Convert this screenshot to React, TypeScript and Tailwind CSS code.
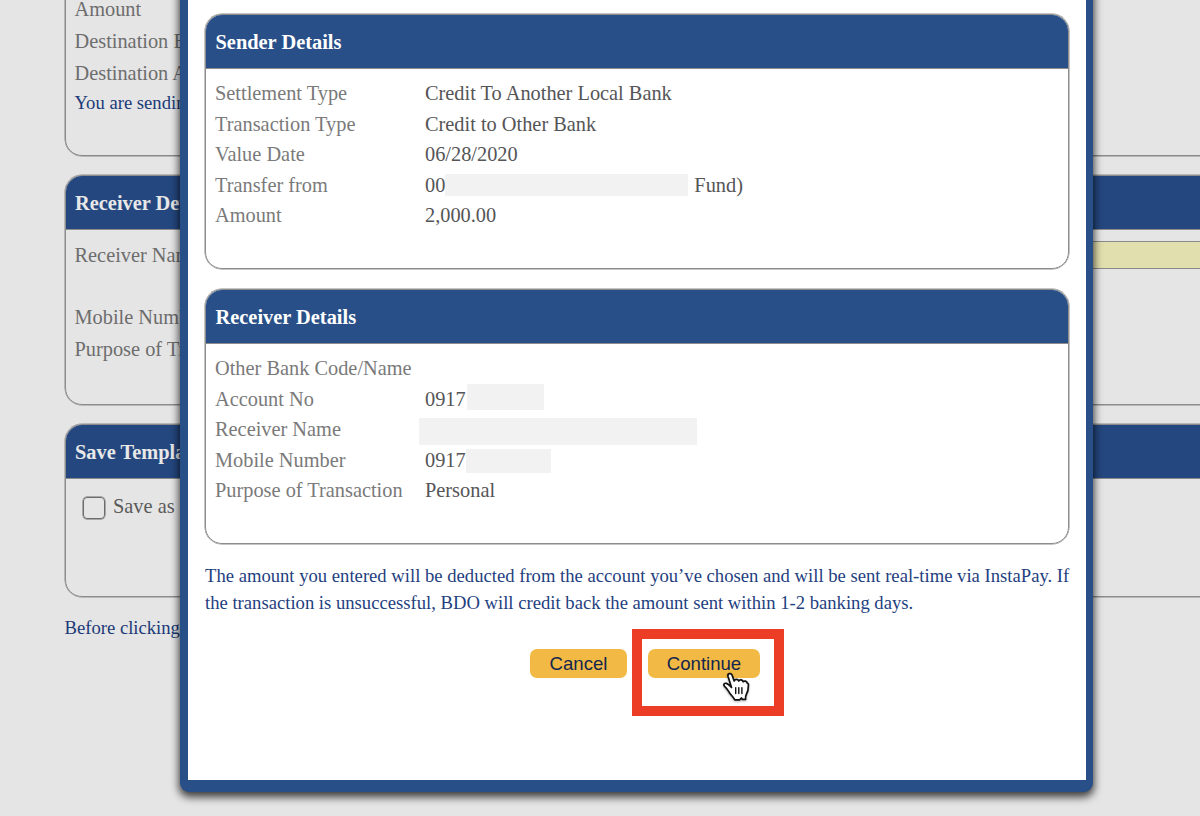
import type { ReactNode } from "react";

function Card({ title, className, headerClass, children }: { title: string; className: string; headerClass: string; children: ReactNode }) {
  return (
    <section className={`shrink-0 overflow-hidden rounded-[17px] border border-[#8c8c8c] shadow-[0_0_0_0.5px_#8c8c8c] ${className}`}>
      <h2 className={`flex items-center border-b border-[#8c8c8c] pl-[9.5px] pt-[2px] text-[20.4px] font-bold ${headerClass}`}>{title}</h2>
      {children}
    </section>
  );
}

function Row({ label, children }: { label: string; children?: ReactNode }) {
  return (
    <div className="flex h-[30.5px] items-center whitespace-nowrap">
      <dt className="w-[210px] shrink-0 text-[#7a7a7a]">{label}</dt>
      <dd className="flex h-full items-center text-[#555557]">{children}</dd>
    </div>
  );
}

function PageBehind() {
  return (
    <div className="flex h-full flex-col pl-[64.5px] text-[20.35px] text-[#6d6d6d]">
      <section className="-mt-10 h-[196px] w-[1300px] shrink-0 rounded-[17px] border border-[#8a8a8a] pl-[9px] pt-[32px] whitespace-nowrap shadow-[0_0_0_0.5px_#8a8a8a]">
        <p className="h-8 leading-8">Amount</p>
        <p className="h-8 leading-8">Destination Bank</p>
        <p className="h-8 leading-8">Destination Account</p>
        <p className="h-7 text-[18.65px] leading-7 text-[#1b3a78]">You are sending</p>
      </section>
      <Card title="Receiver Details" className="mt-[19px] h-[230px] w-[1300px]" headerClass="h-[54px] bg-[#24477f] text-[#e8e8e8]">
        <div className="flex h-[49px] items-center pl-[9px]">
          <span className="w-[590px] pt-px">Receiver Name</span>
          <div className="h-[28px] w-[600px] border border-[#8a8a8a] bg-[#e2dfae]" />
        </div>
        <div className="pl-[9px] pt-[22px]">
          <p className="h-8 leading-8">Mobile Number</p>
          <p className="h-8 leading-8">Purpose of Transaction</p>
        </div>
      </Card>
      <Card title="Save Template" className="mt-[19px] h-[173px] w-[1300px]" headerClass="h-[54px] bg-[#24477f] text-[#e8e8e8]">
        <div className="flex items-start gap-2 pl-[17.5px] pt-[14px] text-[#5a5a5a]">
          <span className="mt-[4px] size-[22px] rounded-[4px] border-[1.5px] border-[#6c6c6c] shadow-[0_0_0_0.5px_#6c6c6c]" />
          <span className="pt-px leading-6">Save as template</span>
        </div>
      </Card>
      <p className="mt-[17px] text-[18.65px] leading-7 text-[#1b3a78]">Before clicking</p>
    </div>
  );
}

function HandCursor() {
  return (
    <svg
      className="absolute left-[77.5px] top-[31px] h-[33px] w-8 drop-shadow-[0_1px_1px_rgba(0,0,0,0.3)]"
      viewBox="0 0 32 33"
      fill="white"
      stroke="#111"
      strokeWidth="1.7"
      strokeLinejoin="round"
      strokeLinecap="round"
    >
      <path d="M11.5 17.5 8 6.2C7.3 3.6 10.9 2.4 12 5l2.2 6c.6-2.2 3.8-2.2 4.5 0 .9-1.8 3.9-1.4 4.5.8 1.2-1.4 3.6-.8 4 1.2.8.2 1.4 1 1.2 2.5 0 3.1-.4 6-1.9 8.5-.9 1.6-1.1 3-.9 5.3h-3.4l-.8-1.3-1.8 1.8h-4.8c-1.6-3-3.6-4.6-5.2-6.8-1.4-2.2-2.4-4.4-5-6.6-1.8-1.8-.2-3.6 1.8-3 2 .6 3.2 2.1 5.1 4.1Z" />
      <path d="M15.7 17.6v6M18.8 17.6v6M21.9 17.6v6" strokeWidth="1.4" />
    </svg>
  );
}

export default function App() {
  return (
    <main className="relative h-[816px] w-[1200px] overflow-hidden bg-[#e5e5e5] font-['Liberation_Serif',serif]">
      <PageBehind />
      <div className="absolute left-[180px] top-[-20px] flex h-[812px] w-[913px] flex-col rounded-[9px] border-b-[12px] border-l-8 border-r-[7px] border-[#284f87] bg-white px-[17px] pt-[34px] shadow-[0_4px_9px_1px_rgba(0,0,0,0.75)]">
        <Card title="Sender Details" className="h-[255px]" headerClass="h-[54px] bg-[#284f87] text-white">
          <dl className="pl-[9px] pt-[9px] text-[20.35px]">
            <Row label="Settlement Type">Credit To Another Local Bank</Row>
            <Row label="Transaction Type">Credit to Other Bank</Row>
            <Row label="Value Date">06/28/2020</Row>
            <Row label="Transfer from">
              00<span className="mr-[6px] h-[22px] w-[243px] bg-[#f2f2f2]" />Fund)
            </Row>
            <Row label="Amount">2,000.00</Row>
          </dl>
        </Card>
        <Card title="Receiver Details" className="mt-5 h-[255px]" headerClass="h-[54px] bg-[#284f87] text-white">
          <dl className="pl-[9px] pt-[9px] text-[20.35px]">
            <Row label="Other Bank Code/Name" />
            <Row label="Account No">
              0917<span className="mb-1 ml-[1px] h-[26px] w-[77px] bg-[#f2f2f2]" />
            </Row>
            <Row label="Receiver Name">
              <span className="-ml-[6px] mt-1 h-[27px] w-[278px] bg-[#f2f2f2]" />
            </Row>
            <Row label="Mobile Number">
              0917<span className="mt-[2px] h-[24px] w-[85px] bg-[#f2f2f2]" />
            </Row>
            <Row label="Purpose of Transaction">Personal</Row>
          </dl>
        </Card>
        <p className="mt-[18px] whitespace-nowrap text-[18.65px] leading-[27px] text-[#1f4180]">
          The amount you entered will be deducted from the account you’ve chosen and will be sent real-time via InstaPay. If
          <br />
          the transaction is unsuccessful, BDO will credit back the amount sent within 1-2 banking days.
        </p>
        <div className="mt-[13px] flex pl-[325px] font-['Liberation_Sans',sans-serif] text-[18.6px] text-[#14264e]">
          <button className="mt-[20px] h-[29px] w-[97px] rounded-[7px] bg-[#f2b944]">Cancel</button>
          <div className="relative ml-[5px] h-[87px] w-[152px] border-[10px] border-[#ec3d27] pl-[6px] pt-[10px]">
            <button className="block h-[29px] w-[112px] rounded-[7px] bg-[#f2b944]">Continue</button>
            <HandCursor />
          </div>
        </div>
      </div>
    </main>
  );
}
